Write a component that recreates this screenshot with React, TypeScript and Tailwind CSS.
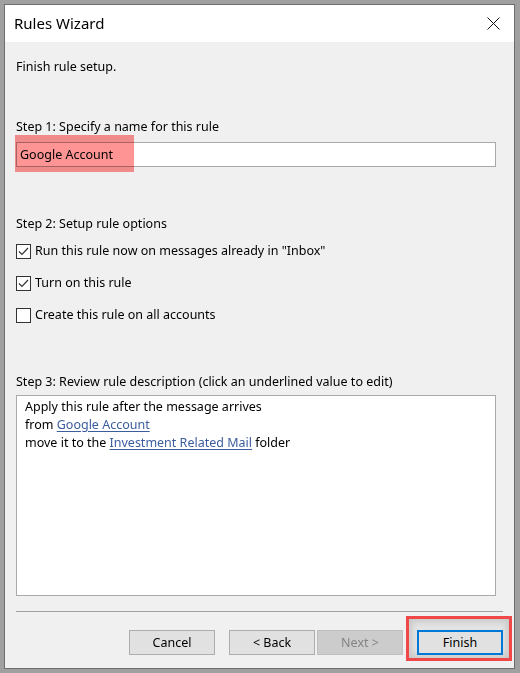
import React from 'react';

const font = "font-['Segoe_UI','Noto_Sans',sans-serif]";

function Check({ checked }: { checked: boolean }) {
  return (
    <span className="flex h-[15px] w-[15px] shrink-0 items-center justify-center border border-[#333333] bg-white">
      {checked && (
        <svg width="11" height="9" viewBox="0 0 11 9" fill="none">
          <path d="M1 4.5 L4 7.5 L10 1" stroke="#333333" strokeWidth="1.2" />
        </svg>
      )}
    </span>
  );
}

const options = [
  { label: 'Run this rule now on messages already in "Inbox"', checked: true },
  { label: 'Turn on this rule', checked: true },
  { label: 'Create this rule on all accounts', checked: false },
];

export default function App() {
  return (
    <div className={`w-[520px] h-[673px] bg-[#a0a0a0] pl-[4px] pt-[4px] ${font}`}>
      <div className="flex h-[665px] w-[511px] flex-col border border-[#6e6e6e] bg-[#f0f0f0]">
        {/* Title bar */}
        <div className="flex h-[37px] items-center justify-between bg-white pl-[9px] pr-[14px]">
          <span className="text-[15px] text-black">Rules Wizard</span>
          <svg width="13" height="13" viewBox="0 0 13 13">
            <path d="M0.5 0.5 L12.5 12.5 M12.5 0.5 L0.5 12.5" stroke="#111" strokeWidth="1" />
          </svg>
        </div>

        {/* Body */}
        <div className="flex flex-1 flex-col pl-[11px] pr-[11px] text-[12.5px] leading-[16px] text-black">
          <p className="mt-[17px]">Finish rule setup.</p>

          <p className="mt-[44px]">Step 1: Specify a name for this rule</p>
          <div className="relative mt-[7px] mr-[7px]">
            <div className="flex h-[25px] items-center border border-[#a9a9a9] bg-white pl-[3px]">
              Google Account
            </div>
            <div className="absolute left-[-1px] top-[-7px] h-[37px] w-[119px] bg-[#ff9494] mix-blend-multiply" />
          </div>

          <p className="mt-[49px]">Step 2: Setup rule options</p>
          <div className="mt-[11px] flex flex-col gap-[16px]">
            {options.map((o) => (
              <div key={o.label} className="flex items-center gap-[4px]">
                <Check checked={o.checked} />
                <span>{o.label}</span>
              </div>
            ))}
          </div>

          <p className="mt-[51px]">Step 3: Review rule description (click an underlined value to edit)</p>
          <div className="mt-[5px] mr-[7px] h-[201px] border border-[#a9a9a9] bg-white pl-[8px] pt-[2px] leading-[18px]">
            <p>Apply this rule after the message arrives</p>
            <p>
              from <span className="text-[#3b5d9e] underline underline-offset-2">Google Account</span>
            </p>
            <p>
              move it to the <span className="text-[#3b5d9e] underline underline-offset-2">Investment Related Mail</span> folder
            </p>
          </div>

          <div className="mt-[15px] h-px bg-[#a0a0a0]" />

          <div className="mt-[18px] flex justify-end">
            <button className="h-[25px] w-[86px] border border-[#adadad] bg-[#e1e1e1] text-[12.5px]">Cancel</button>
            <button className="ml-[14px] h-[25px] w-[86px] border border-[#adadad] bg-[#e1e1e1] text-[12.5px]">&lt; Back</button>
            <button className="ml-[2px] h-[25px] w-[86px] border border-[#bfbfbf] bg-[#cccccc] text-[12.5px] text-[#838383]">Next &gt;</button>
            <div className="relative ml-[14px]">
              <div className="absolute left-[-11px] top-[-14px] h-[45px] w-[106px] border-[3px] border-[#f04848] bg-[#e4e4e4] shadow-[inset_0_0_6px_3px_rgba(0,0,0,0.12)]" />
              <button className="relative h-[25px] w-[86px] border-2 border-[#0078d7] bg-[#e1e1e1] text-[12.5px]">Finish</button>
            </div>
          </div>
        </div>
      </div>
    </div>
  );
}
